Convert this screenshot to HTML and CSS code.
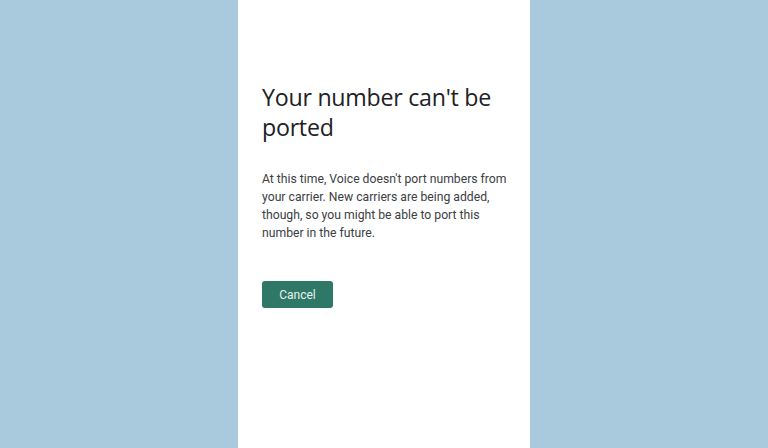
FILE: index.html
```html
<!DOCTYPE html>
<html>
<head>
<meta charset="utf-8">
<link rel="stylesheet" href="styles.css">
</head>
<body>
<div class="page">
  <main class="panel">
    <h1 class="title">Your number can't be ported</h1>
    <p class="body">At this time, Voice doesn't port numbers from your carrier. New carriers are being added, though, so you might be able to port this number in the future.</p>
    <button class="btn">Cancel</button>
  </main>
</div>
</body>
</html>
```
FILE: styles.css
```css
html, body {
  margin: 0;
  padding: 0;
  height: 100%;
}
body {
  background: #a9c9dd;
  font-family: Roboto, "Liberation Sans", Arial, sans-serif;
}
.page {
  display: flex;
  justify-content: center;
  height: 448px;
}
.panel {
  width: 292px;
  background: #ffffff;
  box-sizing: border-box;
  padding: 82px 24px 0 24px;
  display: flex;
  flex-direction: column;
  align-items: flex-start;
}
.title {
  margin: 0;
  font-family: "Open Sans", Roboto, sans-serif;
  font-weight: 400;
  font-size: 23.2px;
  line-height: 30px;
  color: #202124;
  letter-spacing: -0.25px;
}
.body {
  margin: 28px 0 0 0;
  font-size: 12.2px;
  line-height: 18px;
  color: #3c4043;
  width: 252px;
}
.btn {
  margin-top: 39px;
  width: 71px;
  height: 27px;
  border: none;
  border-radius: 3px;
  background: #2f7867;
  color: #e6f2ee;
  font-family: Roboto, sans-serif;
  font-size: 12px;
  font-weight: 400;
  padding: 0;
}
```
